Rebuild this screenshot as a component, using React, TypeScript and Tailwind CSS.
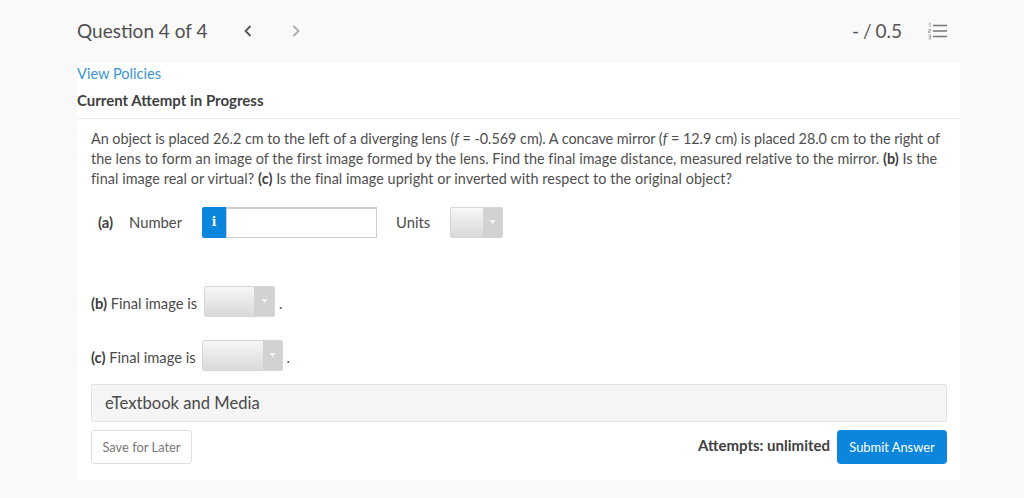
import React from "react";

function Select({ w, arrow }: { w: string; arrow: string }) {
  return (
    <span className={`inline-flex h-[31px] ${w} rounded-[2px] border border-[#d6d6d6] bg-gradient-to-b from-[#f7f7f7] to-[#d9d9d9]`}>
      <span className="flex-1" />
      <span className={`${arrow} flex items-center justify-center bg-[#d2d2d2]`}>
        <svg width="7" height="6" viewBox="0 0 7 6"><path d="M0.5 1h6L3.5 5.5z" fill="#f2f2f2" /></svg>
      </span>
    </span>
  );
}

export default function App() {
  return (
    <div className="h-[498px] w-[1024px] overflow-hidden bg-[#f9f9f9] font-['Lato','Noto_Sans',sans-serif] text-[#4a4a4a]">
      <header className="flex h-[63px] items-center pb-[1px] pl-[77px] pr-[77px]">
        <h1 className="w-[166px] text-[19px] leading-[24px] text-[#4f4f4f]">Question 4 of 4</h1>
        <svg width="10" height="14" viewBox="0 0 10 14" fill="none" stroke="#555" strokeWidth="1.8">
          <path d="M7.5 2L2.5 7l5 5" />
        </svg>
        <svg width="10" height="14" viewBox="0 0 10 14" className="ml-[38px]" fill="none" stroke="#aaa" strokeWidth="1.8">
          <path d="M2.5 2l5 5-5 5" />
        </svg>
        <span className="ml-auto text-[19px] leading-[24px] text-[#555] [word-spacing:-1px]">- / 0.5</span>
        <svg width="19" height="18" viewBox="0 0 19 18" className="ml-[26px]" fill="none">
          <path d="M5 3.5h14M5 9h14M5 14.5h14" stroke="#777" strokeWidth="1.3" />
          <path d="M1 1h1v4M0.5 7.5h2v1.5h-2v1.5h2M0.5 13h2v4h-2M0.5 15h2" stroke="#888" strokeWidth="0.7" />
        </svg>
      </header>

      <main className="ml-[77px] h-[417px] w-[883px] bg-white">
        <a className="block pt-[1px] text-[14.6px] leading-[20px] text-[#3b95d3]">View Policies</a>
        <div className="mt-[6px] border-b border-[#ececec] pb-[8px] text-[15px] font-bold leading-[20px] text-[#404040]">
          Current Attempt in Progress
        </div>

        <div className="px-[14px]">
          <p className="mt-[9.5px] w-[856px] text-[14.4px] leading-[20.3px] text-[#4f4f4f]">
            <span className="block tracking-[-0.027px] whitespace-nowrap">An object is placed 26.2 cm to the left of a diverging lens (<i>f</i> = -0.569 cm). A concave mirror (<i>f</i> = 12.9 cm) is placed 28.0 cm to the right of</span>
            <span className="block tracking-[0.025px] whitespace-nowrap">the lens to form an image of the first image formed by the lens. Find the final image distance, measured relative to the mirror. <b className="text-[#404040]">(b)</b> Is the</span>
            <span className="block tracking-[0.07px] whitespace-nowrap">final image real or virtual? <b className="text-[#404040]">(c)</b> Is the final image upright or inverted with respect to the original object?</span>
          </p>

          <div className="mt-[17.6px] flex h-[31px] items-center pl-[7px] text-[14.8px]">
            <b className="w-[31px] text-[#404040]">(a)</b>
            <span className="w-[73px]">Number</span>
            <span className="flex h-[31px] w-[24px] items-center justify-center rounded-l-[2px] bg-[#0c85dc] font-['DejaVu_Serif',serif] text-[12px] font-bold text-white">i</span>
            <span className="h-[31px] w-[151px] border border-t-2 border-[#cfcfcf] bg-white" />
            <span className="ml-[19px] w-[54px]">Units</span>
            <Select w="w-[53px]" arrow="w-[19px]" />
          </div>

          <div className="mt-[50px] flex h-[31px] items-center text-[14.7px]">
            <span><b className="text-[#404040]">(b)</b> Final image is</span>
            <span className="ml-[7px]"><Select w="w-[71px]" arrow="w-[20px]" /></span>
            <span className="ml-[4px]">.</span>
          </div>

          <div className="mt-[23px] flex h-[31px] items-center text-[14.7px]">
            <span><b className="text-[#404040]">(c)</b> Final image is</span>
            <span className="ml-[6px]"><Select w="w-[81px]" arrow="w-[19px]" /></span>
            <span className="ml-[4px]">.</span>
          </div>

          <div className="mt-[11px] flex h-[38px] w-[856px] items-center rounded-[2px] border border-[#e2e2e2] bg-[#f5f5f5] pt-[1px] pl-[13px] text-[16.6px] text-[#4a4a4a]">
            eTextbook and Media
          </div>

          <div className="mt-[8px] flex w-[856px] items-center">
            <button className="h-[34px] w-[101px] rounded-[3px] border border-[#e0e0e0] bg-white pt-[1px] text-[12.9px] text-[#777]">Save for Later</button>
            <span className="ml-auto pb-[3px] text-[15px] font-bold text-[#404040]">Attempts: unlimited</span>
            <button className="ml-[7px] h-[34px] w-[110px] rounded-[4px] bg-[#0c85dc] pt-[1px] text-[12.9px] text-white">Submit Answer</button>
          </div>
        </div>
      </main>
    </div>
  );
}
